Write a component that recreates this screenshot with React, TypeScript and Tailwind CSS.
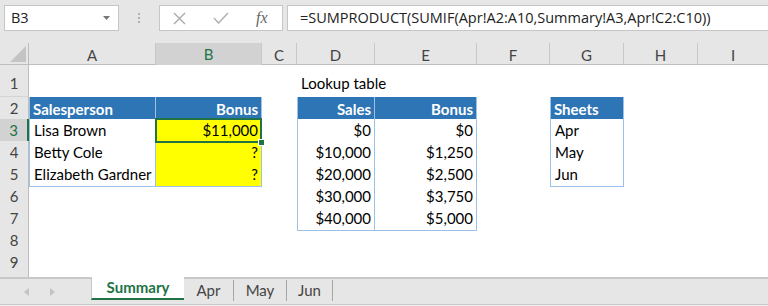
import React from "react";

const cellFont = { fontFamily: "Lato, 'Liberation Sans', sans-serif" };
const uiFont = { fontFamily: "'Open Sans', 'Noto Sans', sans-serif" };

const COLS = "grid grid-cols-[29px_127px_106px_35px_78px_102px_73px_74px_74px_71px]";
const letters = ["A", "B", "C", "D", "E", "F", "G", "H", "I"];

type C = { t?: string; k?: "h" | "hr" | "b" | "br" | "y" | "sel"; first?: boolean; nowrap?: boolean };

// row number -> column index (0 = A) -> cell
const data: Record<number, Record<number, C>> = {
  1: { 3: { t: "Lookup table", nowrap: true } },
  2: {
    0: { t: "Salesperson", k: "h", first: true },
    1: { t: "Bonus", k: "hr" },
    3: { t: "Sales", k: "hr", first: true },
    4: { t: "Bonus", k: "hr" },
    6: { t: "Sheets", k: "h", first: true },
  },
  3: {
    0: { t: "Lisa Brown", k: "b", first: true },
    1: { t: "$11,000", k: "sel" },
    3: { t: "$0", k: "br", first: true },
    4: { t: "$0", k: "br" },
    6: { t: "Apr", k: "b", first: true },
  },
  4: {
    0: { t: "Betty Cole", k: "b", first: true },
    1: { t: "?", k: "y" },
    3: { t: "$10,000", k: "br", first: true },
    4: { t: "$1,250", k: "br" },
    6: { t: "May", k: "b", first: true },
  },
  5: {
    0: { t: "Elizabeth Gardner", k: "b", first: true },
    1: { t: "?", k: "y" },
    3: { t: "$20,000", k: "br", first: true },
    4: { t: "$2,500", k: "br" },
    6: { t: "Jun", k: "b", first: true },
  },
  6: { 3: { t: "$30,000", k: "br", first: true }, 4: { t: "$3,750", k: "br" } },
  7: { 3: { t: "$40,000", k: "br", first: true }, 4: { t: "$5,000", k: "br" } },
};

function Cell({ c }: { c?: C }) {
  if (!c) return <div />;
  const first = c.first ? "border-l" : "";
  if (c.k === "h" || c.k === "hr")
    return (
      <div
        className={`flex items-center bg-[#2e75b6] border-r border-[#9bc2e6] ${first} ${
          c.k === "hr" ? "justify-end pr-[3px]" : "pl-[3px]"
        } font-bold text-white`}
      >
        {c.t}
      </div>
    );
  if (c.k === "sel")
    return (
      <div className="relative flex items-center justify-end bg-[#ffff00] border-r border-b border-[#9bc2e6] pr-[3px]">
        {c.t}
        <div className="absolute -left-px -top-px -right-px -bottom-px border-2 border-[#217346]" />
        <div className="absolute -right-[4px] -bottom-[4px] h-[7px] w-[7px] bg-[#217346] border border-white" />
      </div>
    );
  const bg = c.k === "y" ? "bg-[#ffff00]" : c.k ? "bg-white" : "";
  const bd = c.k ? `border-r border-b border-[#9bc2e6] ${first}` : "";
  const al = c.k === "br" || c.k === "y" ? "justify-end pr-[3px]" : "pl-[4px]";
  return (
    <div className={`flex items-center ${bg} ${bd} ${al} ${c.nowrap ? "whitespace-nowrap overflow-visible items-end pb-[3px]" : ""}`}>
      {c.t}
    </div>
  );
}

function Row({ n }: { n: number }) {
  const h = n === 1 ? "h-[32px]" : "h-[22px]";
  const sel = n === 3;
  return (
    <div className={`${COLS} ${h} shrink-0 text-[15px] text-black`} style={cellFont}>
      <div
        className={`flex justify-center ${n === 1 ? "items-end pb-[2px]" : "items-center"} border-b border-[#d4d4d4] ${
          sel ? "bg-[#d2d2d2] text-[#217346] border-r-2 border-r-[#217346]" : "bg-[#e6e6e6] text-[#444] border-r border-r-[#bdbdbd]"
        }`}
      >
        {n < 10 ? n : null}
      </div>
      {letters.map((_, i) => (
        <Cell key={i} c={data[n]?.[i]} />
      ))}
    </div>
  );
}

export default function App() {
  return (
    <div className="w-[768px] h-[306px] overflow-hidden bg-[#e6e6e6] flex flex-col select-none">
      {/* Name box + formula bar */}
      <div className="h-[43px] shrink-0 flex items-start pt-[5px] pl-[4px] gap-[4px]" style={uiFont}>
        <div className="w-[115px] h-[26px] bg-white border border-[#c6c6c6] flex items-center justify-between pl-[6px] pr-[8px] text-[14.5px] text-[#222]">
          B3
          <svg width="7" height="4" viewBox="0 0 7 4"><path d="M0 0h7L3.5 4z" fill="#777" /></svg>
        </div>
        <div className="w-[32px] h-[26px] flex flex-col items-center justify-center gap-[2px]">
          <span className="h-[2px] w-[2px] bg-[#b0b0b0]" />
          <span className="h-[2px] w-[2px] bg-[#b0b0b0]" />
          <span className="h-[2px] w-[2px] bg-[#b0b0b0]" />
        </div>
        <div className="w-[124px] h-[26px] bg-white border border-[#c6c6c6] flex items-center pl-[13px] gap-[27px]">
          <svg width="13" height="13" viewBox="0 0 13 13">
            <path d="M1 1l11 11M12 1L1 12" stroke="#a9a9a9" strokeWidth="1.4" fill="none" />
          </svg>
          <svg width="16" height="12" viewBox="0 0 16 12">
            <path d="M1 6l4.5 5L15 1" stroke="#b4b4b4" strokeWidth="1.6" fill="none" />
          </svg>
          <span className="italic text-[16px] text-[#666] leading-none" style={{ fontFamily: "'Liberation Serif', serif" }}>
            fx
          </span>
        </div>
        <div className="flex-1 h-[26px] bg-white border border-[#c6c6c6] border-r-0 flex items-center pl-[12px] text-[14.5px] text-[#222] whitespace-nowrap">
          =SUMPRODUCT(SUMIF(Apr!A2:A10,Summary!A3,Apr!C2:C10))
        </div>
      </div>

      {/* Column headers */}
      <div className={`${COLS} h-[22px] shrink-0 text-[15px] text-[#444] border-b border-[#bdbdbd]`} style={cellFont}>
        <div className="relative border-r border-[#bdbdbd]">
          <svg className="absolute left-[10px] top-[3px]" width="16" height="16" viewBox="0 0 16 16">
            <path d="M16 0v16H0z" fill="#c4c4c4" />
          </svg>
        </div>
        {letters.map((l) => (
          <div
            key={l}
            className={`flex items-center justify-center border-r border-[#c8c8c8] ${
              l === "B" ? "bg-[#d2d2d2] text-[#217346] border-b-2 border-b-[#217346]" : ""
            }`}
          >
            {l}
          </div>
        ))}
      </div>

      {/* Sheet body */}
      <div className="h-[212px] shrink-0 overflow-hidden bg-white flex flex-col">
        {[1, 2, 3, 4, 5, 6, 7, 8, 9, 10].map((n) => (
          <Row key={n} n={n} />
        ))}
      </div>

      {/* Sheet tabs */}
      <div className="flex-1 flex border-t-2 border-[#c8c8c8] text-[15px]" style={cellFont}>
        <div className="w-[91px] flex items-center pl-[24px] gap-[21px]">
          <svg width="5" height="8" viewBox="0 0 5 8"><path d="M5 0v8L0 4z" fill="#c4c4c4" /></svg>
          <svg width="5" height="8" viewBox="0 0 5 8"><path d="M0 0v8l5-4z" fill="#c4c4c4" /></svg>
        </div>
        <div className="flex items-start h-[25px]">
          <div className="w-[93px] h-[23px] -mt-[2px] bg-white border-l border-[#c8c8c8] border-b-2 border-b-[#217346] flex items-center justify-center font-bold text-[#217346]">
            Summary
          </div>
          <div className="w-[50px] h-[21px] mt-[1px] border-r border-[#a6a6a6] flex items-center justify-center text-[#444]">Apr</div>
          <div className="w-[53px] h-[21px] mt-[1px] border-r border-[#a6a6a6] flex items-center justify-center text-[#444]">May</div>
          <div className="w-[46px] h-[21px] mt-[1px] border-r border-[#a6a6a6] flex items-center justify-center text-[#444]">Jun</div>
        </div>
      </div>
      <div className="h-[2px] shrink-0 border-t border-[#c8c8c8] bg-[#ececec]" />
    </div>
  );
}
